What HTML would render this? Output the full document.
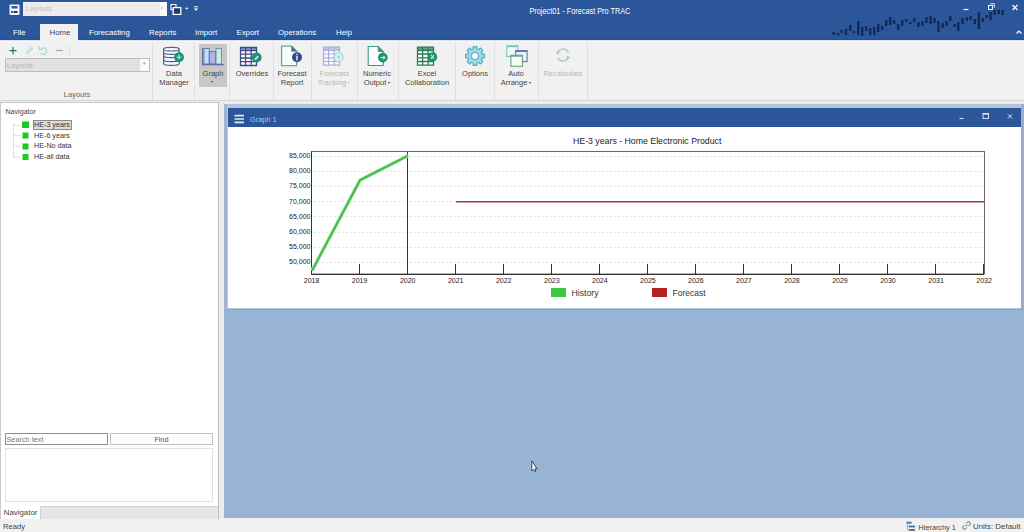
<!DOCTYPE html>
<html><head><meta charset="utf-8">
<style>
*{margin:0;padding:0;box-sizing:border-box}
html,body{width:1024px;height:532px;overflow:hidden;background:#f0f0f0;font-family:"Liberation Sans",sans-serif;position:relative}
.a{position:absolute}
.t{position:absolute;white-space:pre;line-height:1}
#top{left:0;top:0;width:1024px;height:40px;background:#2b579a}
.tab{position:absolute;top:27.5px;font-size:7.8px;color:#fff;white-space:pre;line-height:10px}
#ribbon{left:0;top:40px;width:1024px;height:61px;background:#f1f1f1;border-bottom:1px solid #d6d6d6}
.sep{position:absolute;top:42px;width:1px;height:58px;background:#e0e0e0}
.lbl{position:absolute;font-size:7.5px;color:#444;white-space:pre;line-height:9px;text-align:center}
.dis{color:#b8b8b8}
.dd{display:inline-block;width:0;height:0;border-left:1.6px solid transparent;border-right:1.6px solid transparent;border-top:2.2px solid #444;margin-left:2px;vertical-align:1px}
.dis .dd{border-top-color:#c8c8c8}
.ax{font-size:7px;color:#1a1a1a}
.nav{font-size:7.2px;color:#333}
</style></head><body>
<div id="top" class="a"></div>
<!-- save icon -->
<svg class="a" style="left:9px;top:4px" width="11" height="11" viewBox="0 0 11 11">
<rect x="0.5" y="0.5" width="10" height="10.5" rx="1" fill="#eef4fb"/>
<rect x="2.5" y="2" width="6" height="2.5" fill="#3b5e92"/>
<rect x="2" y="7" width="2.4" height="2" fill="#3b5e92"/>
<rect x="5" y="7" width="3.5" height="2" fill="#1e3258"/>
</svg>
<div class="a" style="left:23px;top:2px;width:144px;height:13.6px;background:#ebebeb;border-top:1px solid #f6f6f6"></div>
<div class="a" style="left:159.7px;top:2px;width:7px;height:13.6px;background:#fbfbfb"></div>
<div class="t" style="left:26px;top:5px;font-size:7.4px;color:#c3c3c3">Layouts</div>
<svg class="a" style="left:160px;top:7px" width="4" height="3" viewBox="0 0 4 3"><path d="M0.3 0.5h3l-1.5 2z" fill="#c8b8a8"/></svg>

<svg class="a" style="left:0;top:0" width="1024" height="40" viewBox="0 0 1024 40">
<rect x="832.5" y="32" width="2.4" height="3" fill="#142a55"/>
<rect x="837.0" y="33" width="2.4" height="2.5" fill="#142a55"/>
<rect x="840.5" y="30" width="2.4" height="3" fill="#142a55"/>
<rect x="844.8" y="29" width="2.4" height="6" fill="#142a55"/>
<rect x="849.0" y="25" width="2.4" height="6" fill="#142a55"/>
<rect x="852.5" y="31" width="2.4" height="2" fill="#142a55"/>
<rect x="857.0" y="21" width="2.4" height="14" fill="#142a55"/>
<rect x="861.0" y="27" width="2.4" height="9" fill="#142a55"/>
<rect x="865.0" y="26" width="2.4" height="5" fill="#142a55"/>
<rect x="869.0" y="28" width="2.4" height="7" fill="#142a55"/>
<rect x="873.0" y="27" width="2.4" height="8" fill="#142a55"/>
<rect x="877.0" y="24" width="2.4" height="8" fill="#142a55"/>
<rect x="881.0" y="26" width="2.4" height="4" fill="#142a55"/>
<rect x="885.0" y="20" width="2.4" height="6" fill="#142a55"/>
<rect x="889.0" y="17" width="2.4" height="8" fill="#142a55"/>
<rect x="893.0" y="20" width="2.4" height="4" fill="#142a55"/>
<rect x="897.0" y="24" width="2.4" height="6" fill="#142a55"/>
<rect x="901.0" y="20" width="2.4" height="6" fill="#142a55"/>
<rect x="905.0" y="19" width="2.4" height="3" fill="#142a55"/>
<rect x="909.0" y="22" width="2.4" height="2" fill="#142a55"/>
<rect x="913.0" y="18" width="2.4" height="4" fill="#142a55"/>
<rect x="917.2" y="22" width="2.4" height="5" fill="#142a55"/>
<rect x="921.2" y="21" width="2.4" height="5" fill="#142a55"/>
<rect x="925.2" y="17" width="2.4" height="6" fill="#142a55"/>
<rect x="929.4" y="16" width="2.4" height="8" fill="#142a55"/>
<rect x="933.2" y="18" width="2.4" height="5" fill="#142a55"/>
<rect x="937.2" y="21" width="2.4" height="11" fill="#142a55"/>
<rect x="941.5" y="23" width="2.4" height="5" fill="#142a55"/>
<rect x="945.4" y="21" width="2.4" height="5" fill="#142a55"/>
<rect x="949.1" y="16" width="2.4" height="5" fill="#142a55"/>
<rect x="953.4" y="24" width="2.4" height="3" fill="#142a55"/>
<rect x="957.1" y="22" width="2.4" height="9" fill="#142a55"/>
<rect x="961.4" y="18" width="2.4" height="6" fill="#142a55"/>
<rect x="965.7" y="17" width="2.4" height="4" fill="#142a55"/>
<rect x="969.4" y="16" width="2.4" height="4" fill="#142a55"/>
<rect x="973.6" y="19" width="2.4" height="5" fill="#142a55"/>
<rect x="977.7" y="12" width="2.4" height="17" fill="#142a55"/>
<rect x="981.6" y="18" width="2.4" height="4" fill="#142a55"/>
<rect x="985.4" y="15" width="2.4" height="3" fill="#142a55"/>
<rect x="989.4" y="12" width="2.4" height="8" fill="#142a55"/>
<rect x="993.3" y="10" width="2.4" height="5" fill="#142a55"/>
<rect x="997.6" y="10" width="2.4" height="4" fill="#142a55"/>
<rect x="1001.5" y="10" width="2.4" height="5" fill="#142a55"/>
<path d="M963.5 9.5h5" stroke="#fff" stroke-width="1.2"/>
<rect x="988.5" y="5.5" width="4" height="4" fill="none" stroke="#fff" stroke-width="0.9"/>
<path d="M990.3 3.7h4v4" fill="none" stroke="#fff" stroke-width="0.9"/>
<path d="M1012.5 5l5 5M1017.5 5l-5 5" stroke="#fff" stroke-width="1.2"/>
<path d="M1016.5 33.5l2.5-2.5 2.5 2.5" fill="none" stroke="#fff" stroke-width="1.2"/>
<rect x="171" y="4.6" width="5" height="5" fill="#1e3a6a" stroke="#fff" stroke-width="1.1"/>
<rect x="173.2" y="7.6" width="7.6" height="6.8" fill="#1e3a6a" stroke="#fff" stroke-width="1.3"/>
<path d="M185 7.8h3.6l-1.8 2z" fill="#fff"/>
<path d="M193.8 6.8h4.4" stroke="#fff" stroke-width="0.9"/><path d="M193.8 8.6h4.4l-2.2 2.2z" fill="#fff"/>
</svg>
<div class="t" style="left:529.5px;top:7.5px;font-size:7.3px;color:#fff;transform:scaleY(1.12);transform-origin:0 50%">Project01 - Forecast Pro TRAC</div>

<!-- tabs -->
<div class="a" style="left:40px;top:24px;width:38px;height:16px;background:#f1f1f1"></div>
<div class="tab" style="left:13px">File</div>
<div class="tab" style="left:49.5px;color:#33466a">Home</div>
<div class="tab" style="left:89px">Forecasting</div>
<div class="tab" style="left:149px">Reports</div>
<div class="tab" style="left:195px">Import</div>
<div class="tab" style="left:236.5px">Export</div>
<div class="tab" style="left:278px">Operations</div>
<div class="tab" style="left:336px">Help</div>

<div id="ribbon" class="a"></div>
<div class="a" style="left:0;top:39px;width:40px;height:1px;background:#2a4f8c"></div>
<div class="a" style="left:78px;top:39px;width:946px;height:1px;background:#2a4f8c"></div>
<div class="a" style="left:40px;top:39px;width:38px;height:2px;background:#f1f1f1"></div>
<div class="a" style="left:78px;top:40px;width:946px;height:1px;background:#dae3f0"></div>
<div class="a" style="left:0;top:40px;width:40px;height:1px;background:#dae3f0"></div>
<div class="a" style="left:0;top:41px;width:1024px;height:1px;background:#f6f6f8"></div>


<!-- ribbon separators -->
<div class="sep" style="left:152px"></div>
<div class="sep" style="left:194px"></div>
<div class="sep" style="left:229px"></div>
<div class="sep" style="left:273px"></div>
<div class="sep" style="left:311px"></div>
<div class="sep" style="left:357px"></div>
<div class="sep" style="left:398px"></div>
<div class="sep" style="left:455px"></div>
<div class="sep" style="left:494px"></div>
<div class="sep" style="left:538px"></div>
<div class="sep" style="left:587px"></div>

<!-- layouts group -->
<svg class="a" style="left:8px;top:45px" width="62" height="12" viewBox="0 0 62 12">
<path d="M5 2v7.2M1.4 5.6h7.2" stroke="#356b55" stroke-width="1.2"/>
<path d="M18.5 8.5l0.8-2.4 4.2-4.2 1.6 1.6-4.2 4.2z" fill="#c6e3ec" stroke="#aad0dc" stroke-width="0.5"/>
<path d="M33.5 3.5a3.3 3.3 0 1 1 -1 4.5" fill="none" stroke="#a9d3dd" stroke-width="1.2"/>
<path d="M31.5 1.5v3h3" fill="none" stroke="#a9d3dd" stroke-width="1.2"/>
<path d="M48 5.5h7" stroke="#a8a8a8" stroke-width="1.2"/>
<path d="M61.5 2v9" stroke="#dcdcdc" stroke-width="1"/>
</svg>
<div class="a" style="left:5px;top:58px;width:145px;height:14px;background:#e1e1e1;border:1px solid #bdbdbd"></div>
<div class="a" style="left:140px;top:59px;width:9px;height:12px;background:#fafafa"></div>
<div class="t" style="left:7px;top:62px;font-size:7.4px;color:#b4b4b4">Layouts</div>
<div class="t" style="left:143px;top:61px;font-size:5px;color:#999">&#9662;</div>
<div class="lbl" style="left:47px;width:60px;top:90px;color:#666">Layouts</div>

<!-- Data Manager -->
<svg class="a" style="left:162px;top:46px" width="25" height="21" viewBox="0 0 25 21">
<path d="M1.6 3.2v14.2c0 1.2 3.5 1.9 7.8 1.9s7.8-0.7 7.8-1.9V3.2" fill="#f4f7fc" stroke="#4f5c8c" stroke-width="1.2"/>
<path d="M1.6 6.4c0 1.2 3.5 1.9 7.8 1.9s7.8-0.7 7.8-1.9M1.6 9.8c0 1.2 3.5 1.9 7.8 1.9s7.8-0.7 7.8-1.9M1.6 13.8c0 1.2 3.5 1.9 7.8 1.9s7.8-0.7 7.8-1.9" fill="none" stroke="#4f5c8c" stroke-width="1.2"/>
<ellipse cx="9.4" cy="3.2" rx="7.8" ry="1.8" fill="#fff" stroke="#4f5c8c" stroke-width="1.2"/>
<circle cx="17" cy="11.2" r="4.9" fill="#17926c"/>
<path d="M17 8.6v5.2M14.4 11.2h5.2" stroke="#bfeedd" stroke-width="1.1"/>
</svg>
<div class="lbl" style="left:143px;width:62px;top:69px">Data
Manager</div>

<!-- Graph pressed -->
<div class="a" style="left:199px;top:44px;width:28px;height:43px;background:#c7c7c7"></div>
<svg class="a" style="left:201px;top:47px" width="23" height="19" viewBox="0 0 23 19">
<rect x="3" y="1.5" width="5.3" height="15.5" fill="#c4e2f3" stroke="#6878b0" stroke-width="1"/>
<rect x="8.3" y="4.7" width="6.3" height="12.3" fill="#b3b3ea" stroke="#6068b0" stroke-width="1"/>
<rect x="15" y="1.5" width="5.5" height="15.5" fill="#cce9e3" stroke="#6a9aa5" stroke-width="1"/>
<path d="M1 17.7h21.7" stroke="#5a6aa0" stroke-width="1.2"/>
<path d="M1.5 1v16.5" stroke="#5a6aa0" stroke-width="1"/>
</svg>
<div class="lbl" style="left:192px;width:42px;top:69px">Graph</div>
<div class="a dd" style="left:211px;top:81px;margin:0"></div>

<!-- Overrides -->
<svg class="a" style="left:239px;top:46px" width="25" height="21" viewBox="0 0 25 21">
<rect x="1.5" y="1.5" width="16" height="18" fill="#fff"/>
<rect x="1.5" y="1.5" width="16" height="3.2" fill="#8a90c8"/>
<path d="M1.5 1.5h16v18h-16zM1.5 4.7h16M1.5 8.2h16M1.5 12h16M1.5 15.7h16M6.6 1.5v18M12.2 1.5v18" fill="none" stroke="#3f4a88" stroke-width="1.3"/>
<circle cx="17.7" cy="11.5" r="4.9" fill="#17926c"/>
<path d="M15.3 14.2l0.5-1.8 2.8-2.8 1.3 1.3-2.8 2.8z" fill="#b8f0d8"/>
</svg>
<div class="lbl" style="left:221px;width:62px;top:69px">Overrides</div>

<!-- Forecast Report -->
<svg class="a" style="left:280px;top:45px" width="25" height="22" viewBox="0 0 25 22">
<path d="M1.6 1.2h10l5 5v14.4h-15z" fill="#fafffe" stroke="#6aa59d" stroke-width="1.3"/>
<path d="M11.6 1.2v5h5z" fill="#4a6a70" stroke="#5a8a8a" stroke-width="0.8"/>
<circle cx="17" cy="12.3" r="5" fill="#2d4a93"/>
<path d="M17 10.8v4.6" stroke="#fff" stroke-width="1.3"/>
<circle cx="17" cy="9.2" r="0.75" fill="#fff"/>
</svg>
<div class="lbl" style="left:262px;width:60px;top:69px">Forecast
Report</div>

<!-- Forecast Tracking disabled -->
<svg class="a" style="left:322px;top:46px" width="23" height="21" viewBox="0 0 23 21">
<rect x="1.5" y="1.2" width="16" height="18" fill="#fafaff"/>
<rect x="1.5" y="1.2" width="16" height="3.2" fill="#c0c4e8"/>
<path d="M1.5 1.2h16v18h-16zM1.5 4.5h16M1.5 8h16M1.5 11.8h16M1.5 15.5h16M6.6 1.2v18M12.2 1.2v18" fill="none" stroke="#aab0dc" stroke-width="1.2"/>
<circle cx="16.7" cy="11.2" r="4.6" fill="#d6f0f2" stroke="#9fd2d8" stroke-width="1"/>
<circle cx="16.7" cy="11.2" r="1.6" fill="#a8dade"/>
</svg>
<div class="lbl dis" style="left:304px;width:60px;top:69px">Forecast
Tracking<i class="dd"></i></div>

<!-- Numeric Output -->
<svg class="a" style="left:367px;top:45px" width="24" height="22" viewBox="0 0 24 22">
<path d="M1.2 1.5h10l5 5v14h-15z" fill="#fff" stroke="#3a9a7a" stroke-width="1.1"/>
<path d="M11.2 1.5v5h5z" fill="#5a8a7a" stroke="#3a9a7a" stroke-width="0.8"/>
<circle cx="15.8" cy="12.6" r="4.8" fill="#17926c"/>
<path d="M13.3 12.6h4.6M16.2 10.8l1.8 1.8-1.8 1.8" fill="none" stroke="#b8f0d8" stroke-width="1.1"/>
</svg>
<div class="lbl" style="left:347px;width:60px;top:69px">Numeric
Output<i class="dd"></i></div>

<!-- Excel Collaboration -->
<svg class="a" style="left:416px;top:46px" width="23" height="21" viewBox="0 0 23 21">
<rect x="1.5" y="1.2" width="16" height="18" fill="#fff"/>
<rect x="1.5" y="1.2" width="16" height="3.2" fill="#5aa880"/>
<path d="M1.5 1.2h16v18h-16zM1.5 4.5h16M1.5 8h16M1.5 11.8h16M1.5 15.5h16M6.6 1.2v18M12.2 1.2v18" fill="none" stroke="#2a7a52" stroke-width="1.3"/>
<circle cx="16.5" cy="10.9" r="4.7" fill="#17926c"/>
<path d="M14.9 8.9l3.2 4M18.1 8.9l-3.2 4" stroke="#b8f0d8" stroke-width="1.1"/>
</svg>
<div class="lbl" style="left:387px;width:80px;top:69px">Excel
Collaboration</div>

<!-- Options -->
<svg class="a" style="left:464.3px;top:45.2px" width="22" height="22" viewBox="0 0 22 22">
<path d="M17.74 8.21 L18.05 9.11 L20.42 9.17 L20.42 12.83 L18.05 12.89 L17.74 13.79 L17.32 14.65 L18.96 16.37 L16.37 18.96 L14.65 17.32 L13.79 17.74 L12.89 18.05 L12.83 20.42 L9.17 20.42 L9.11 18.05 L8.21 17.74 L7.35 17.32 L5.63 18.96 L3.04 16.37 L4.68 14.65 L4.26 13.79 L3.95 12.89 L1.58 12.83 L1.58 9.17 L3.95 9.11 L4.26 8.21 L4.68 7.35 L3.04 5.63 L5.63 3.04 L7.35 4.68 L8.21 4.26 L9.11 3.95 L9.17 1.58 L12.83 1.58 L12.89 3.95 L13.79 4.26 L14.65 4.68 L16.37 3.04 L18.96 5.63 L17.32 7.35Z" fill="#9edbe6" stroke="#56aebf" stroke-width="1.2" stroke-linejoin="round"/>
<circle cx="11" cy="11" r="3.6" fill="#fff" stroke="#56aebf" stroke-width="1.3"/>
</svg>
<div class="lbl" style="left:445px;width:60px;top:69px">Options</div>

<!-- Auto Arrange -->
<svg class="a" style="left:505px;top:44px" width="24" height="24" viewBox="0 0 24 24">
<rect x="1.8" y="1.8" width="11" height="10.6" fill="#eefafb" stroke="#7cc0c8" stroke-width="1.1"/>
<path d="M1.8 2.6h11" stroke="#7cc0c8" stroke-width="1.2"/>
<rect x="10.6" y="6.6" width="11.5" height="11" fill="#eef0fb" stroke="#6a70b0" stroke-width="1.1"/>
<path d="M10.6 7.4h11.5" stroke="#6a70b0" stroke-width="1.2"/>
<rect x="5.9" y="11.3" width="11.6" height="11" fill="#f5fbf7" stroke="#62a57c" stroke-width="1.1"/>
<path d="M5.9 12.1h11.6" stroke="#62a57c" stroke-width="1.2"/>
</svg>
<div class="lbl" style="left:486px;width:60px;top:69px">Auto
Arrange<i class="dd"></i></div>

<!-- Recalculate disabled -->
<svg class="a" style="left:554px;top:46px" width="18" height="18" viewBox="0 0 18 18">
<path d="M3.6 7.2a5.8 5.8 0 0 1 10.8-0.8" fill="none" stroke="#a9c9bb" stroke-width="1.4"/>
<path d="M14.6 10.8a5.8 5.8 0 0 1-10.8 0.8" fill="none" stroke="#a9c9bb" stroke-width="1.4"/>
<path d="M1.8 6.2l3.6-1.2-0.4 3.8z" fill="#a9c9bb"/>
<path d="M16.2 11.8l-3.6 1.2 0.4-3.8z" fill="#a9c9bb"/>
</svg>
<div class="lbl dis" style="left:533px;width:60px;top:69px">Recalculate</div>

<!-- main area -->
<div class="a" style="left:0;top:101px;width:1024px;height:417px;background:#ececec"></div>
<div class="a" style="left:0;top:102px;width:219px;height:417px;background:#fff;border:1px solid #c9c9c9;border-right-color:#bdbdbd;border-bottom:none"></div>
<div class="t" style="left:5.5px;top:108.5px;font-size:7.1px;color:#444">Navigator</div>
<svg class="a" style="left:0;top:102px" width="40" height="60" viewBox="0 0 40 60">
<path d="M13.5 22V55.5M13.5 23.5H21M13.5 33.5H21M13.5 44.5H21M13.5 55H21" stroke="#c4c4c4" stroke-width="1" stroke-dasharray="1 1"/>
<rect x="22" y="19.5" width="7" height="6.5" fill="#1ec81e"/>
<rect x="22.5" y="30.5" width="6" height="6" fill="#1ec81e"/>
<rect x="22.5" y="41.5" width="6" height="6" fill="#1ec81e"/>
<rect x="22.5" y="52" width="6" height="6" fill="#1ec81e"/>
</svg>
<div class="a" style="left:32.5px;top:119.5px;width:39.5px;height:10.5px;background:#dcdcdc;border:1px solid #8a8a8a"></div>
<div class="t nav" style="left:34px;top:121px">HE-3 years</div>
<div class="t nav" style="left:34px;top:131.5px">HE-6 years</div>
<div class="t nav" style="left:34px;top:142.2px">HE-No data</div>
<div class="t nav" style="left:34px;top:152.8px">HE-all data</div>

<div class="a" style="left:5px;top:433px;width:103px;height:12px;background:#fff;border:1px solid #8e8e8e"></div>
<div class="t" style="left:6.5px;top:435.5px;font-size:7.3px;color:#777">Search text</div>
<div class="a" style="left:110px;top:433px;width:103px;height:12px;background:#fdfdfd;border:1px solid #c4c4c4"></div>
<div class="t" style="left:110px;top:435.5px;width:103px;text-align:center;font-size:7.3px;color:#555">Find</div>
<div class="a" style="left:5px;top:448px;width:208px;height:54px;background:#fff;border:1px solid #e2e2e2"></div>

<div class="a" style="left:40px;top:505.5px;width:178px;height:14px;background:#e6e6e6;border-top:1px solid #d4d4d4;border-left:1px solid #d0d0d0"></div>
<div class="t" style="left:3.8px;top:508.5px;font-size:7.85px;color:#444">Navigator</div>

<div class="a" style="left:224px;top:104px;width:800px;height:414px;background:#98b4d5"></div>
<!-- graph window -->
<div class="a" style="left:224px;top:104px;width:800px;height:205.5px;background:#b3c5dd;border-left:3.5px solid #a0b5d0;border-right:3px solid #9cadc4;border-bottom:1.5px solid #8fa2bb"></div>
<div class="a" style="left:227.5px;top:107.5px;width:793.5px;height:19.5px;background:#2b579a"></div>
<div class="a" style="left:227.5px;top:127px;width:793.5px;height:181.3px;background:#fff"></div>
<svg class="a" style="left:234px;top:114px" width="11" height="10" viewBox="0 0 11 10">
<path d="M0.5 1.6h9.5M0.5 5h9.5M0.5 8.4h9.5" stroke="#dce9f8" stroke-width="1.7"/>
</svg>
<div class="t" style="left:250px;top:115.5px;font-size:7.4px;color:#b4c7e2">Graph 1</div>
<svg class="a" style="left:955px;top:110px" width="64" height="14" viewBox="0 0 64 14">
<path d="M4.5 8.5h4" stroke="#e8eef8" stroke-width="1"/>
<rect x="28" y="3.5" width="5.5" height="5" fill="none" stroke="#e8eef8" stroke-width="0.9"/>
<path d="M28 4.2h5.5" stroke="#e8eef8" stroke-width="0.8"/>
<path d="M52.8 4.3l4.2 4.2M57 4.3l-4.2 4.2" stroke="#e8eef8" stroke-width="1"/>
</svg>
<div class="t" style="left:573px;top:137px;font-size:8.75px;color:#222">HE-3 years - Home Electronic Product</div>
<svg class="a" style="left:0;top:0" width="1024" height="532" viewBox="0 0 1024 532">
<path d="M314 156.5H983.5" stroke="#e4e4e4" stroke-width="1" stroke-dasharray="2 2"/>
<path d="M314 171.5H983.5" stroke="#e4e4e4" stroke-width="1" stroke-dasharray="2 2"/>
<path d="M314 186.5H983.5" stroke="#e4e4e4" stroke-width="1" stroke-dasharray="2 2"/>
<path d="M314 201.5H983.5" stroke="#e4e4e4" stroke-width="1" stroke-dasharray="2 2"/>
<path d="M314 216.5H983.5" stroke="#e4e4e4" stroke-width="1" stroke-dasharray="2 2"/>
<path d="M314 232.5H983.5" stroke="#e4e4e4" stroke-width="1" stroke-dasharray="2 2"/>
<path d="M314 247.5H983.5" stroke="#e4e4e4" stroke-width="1" stroke-dasharray="2 2"/>
<path d="M314 262.5H983.5" stroke="#e4e4e4" stroke-width="1" stroke-dasharray="2 2"/>
<rect x="311.5" y="151.5" width="673.0" height="122.5" fill="none" stroke="#6a6a6a" stroke-width="1"/>
<path d="M311.5 151.5V274.5H984" fill="none" stroke="#333" stroke-width="1"/>
<path d="M407.5 152V274" stroke="#333" stroke-width="1"/>
<path d="M359.5 264V274" stroke="#333" stroke-width="1"/>
<path d="M407.5 264V274" stroke="#333" stroke-width="1"/>
<path d="M455.5 264V274" stroke="#333" stroke-width="1"/>
<path d="M503.5 264V274" stroke="#333" stroke-width="1"/>
<path d="M551.5 264V274" stroke="#333" stroke-width="1"/>
<path d="M599.5 264V274" stroke="#333" stroke-width="1"/>
<path d="M647.5 264V274" stroke="#333" stroke-width="1"/>
<path d="M695.5 264V274" stroke="#333" stroke-width="1"/>
<path d="M743.5 264V274" stroke="#333" stroke-width="1"/>
<path d="M791.5 264V274" stroke="#333" stroke-width="1"/>
<path d="M839.5 264V274" stroke="#333" stroke-width="1"/>
<path d="M887.5 264V274" stroke="#333" stroke-width="1"/>
<path d="M935.5 264V274" stroke="#333" stroke-width="1"/>
<path d="M983.5 264V274" stroke="#333" stroke-width="1"/>
<polyline points="312.0,270.7 360.0,180.2 408.1,155.6" fill="none" stroke="#a6eea6" stroke-width="3.8" stroke-linejoin="round"/>
<polyline points="312.0,270.7 360.0,180.2 408.1,155.6" fill="none" stroke="#48b448" stroke-width="1.9" stroke-linejoin="round"/>
<path d="M456.1 201.8H984.5" stroke="#a03c3c" stroke-width="1.4"/>
</svg>
<div class="t ax" style="right:713.5px;top:152.0px">85,000</div>
<div class="t ax" style="right:713.5px;top:167.2px">80,000</div>
<div class="t ax" style="right:713.5px;top:182.3px">75,000</div>
<div class="t ax" style="right:713.5px;top:197.5px">70,000</div>
<div class="t ax" style="right:713.5px;top:212.7px">65,000</div>
<div class="t ax" style="right:713.5px;top:227.8px">60,000</div>
<div class="t ax" style="right:713.5px;top:243.0px">55,000</div>
<div class="t ax" style="right:713.5px;top:258.2px">50,000</div>
<div class="t ax" style="left:303.8px;top:276.8px;width:15px;text-align:center">2018</div>
<div class="t ax" style="left:351.8px;top:276.8px;width:15px;text-align:center">2019</div>
<div class="t ax" style="left:399.9px;top:276.8px;width:15px;text-align:center">2020</div>
<div class="t ax" style="left:447.9px;top:276.8px;width:15px;text-align:center">2021</div>
<div class="t ax" style="left:495.9px;top:276.8px;width:15px;text-align:center">2022</div>
<div class="t ax" style="left:544.0px;top:276.8px;width:15px;text-align:center">2023</div>
<div class="t ax" style="left:592.0px;top:276.8px;width:15px;text-align:center">2024</div>
<div class="t ax" style="left:640.1px;top:276.8px;width:15px;text-align:center">2025</div>
<div class="t ax" style="left:688.1px;top:276.8px;width:15px;text-align:center">2026</div>
<div class="t ax" style="left:736.1px;top:276.8px;width:15px;text-align:center">2027</div>
<div class="t ax" style="left:784.2px;top:276.8px;width:15px;text-align:center">2028</div>
<div class="t ax" style="left:832.2px;top:276.8px;width:15px;text-align:center">2029</div>
<div class="t ax" style="left:880.2px;top:276.8px;width:15px;text-align:center">2030</div>
<div class="t ax" style="left:928.3px;top:276.8px;width:15px;text-align:center">2031</div>
<div class="t ax" style="left:976.3px;top:276.8px;width:15px;text-align:center">2032</div>
<div class="a" style="left:551px;top:288px;width:14.5px;height:8.5px;background:#3fc83f"></div>
<div class="t" style="left:571.4px;top:289.2px;font-size:8.75px;color:#333">History</div>
<div class="a" style="left:652px;top:288px;width:14.5px;height:8.5px;background:#b02424"></div>
<div class="t" style="left:672.6px;top:289.2px;font-size:8.53px;color:#333">Forecast</div>

<svg class="a" style="left:530.5px;top:459.5px" width="8" height="13" viewBox="0 0 8 13">
<path d="M0.8 0.8V11L2.4 9.4 3.6 11.8 4.8 11.2 3.8 8.8H6z" fill="#fff" stroke="#2a3850" stroke-width="0.9" stroke-linejoin="round"/>
</svg>
<!-- status bar -->
<div class="a" style="left:0;top:519px;width:1024px;height:13px;background:#f1f1f1"></div>
<div class="t" style="left:3px;top:523px;font-size:7.6px;color:#444">Ready</div>
<svg class="a" style="left:905px;top:520px" width="12" height="12" viewBox="0 0 12 12">
<rect x="1.5" y="1.8" width="5" height="1.8" fill="#3f6ea8"/>
<rect x="4" y="5.6" width="6" height="1.8" fill="#3f6ea8"/>
<rect x="4" y="9" width="6" height="1.8" fill="#3f6ea8"/>
<path d="M2.5 3.6v6.3h1.5M2.5 6.5h1.5" stroke="#999" stroke-width="0.8" fill="none"/>
</svg>
<div class="t" style="left:918.5px;top:523.6px;font-size:7.3px;color:#444">Hierarchy 1</div>
<svg class="a" style="left:961px;top:520px" width="11" height="11" viewBox="0 0 11 11">
<path d="M4.5 6.5l2-2M3.5 5l-1.5 1.5a1.8 1.8 0 0 0 2.5 2.5L6 7.5M7.5 6l1.5-1.5a1.8 1.8 0 0 0-2.5-2.5L5 3.5" stroke="#666" stroke-width="1" fill="none"/>
</svg>
<div class="t" style="left:973px;top:523.2px;font-size:7.9px;color:#444">Units: Default</div>
</body></html>
